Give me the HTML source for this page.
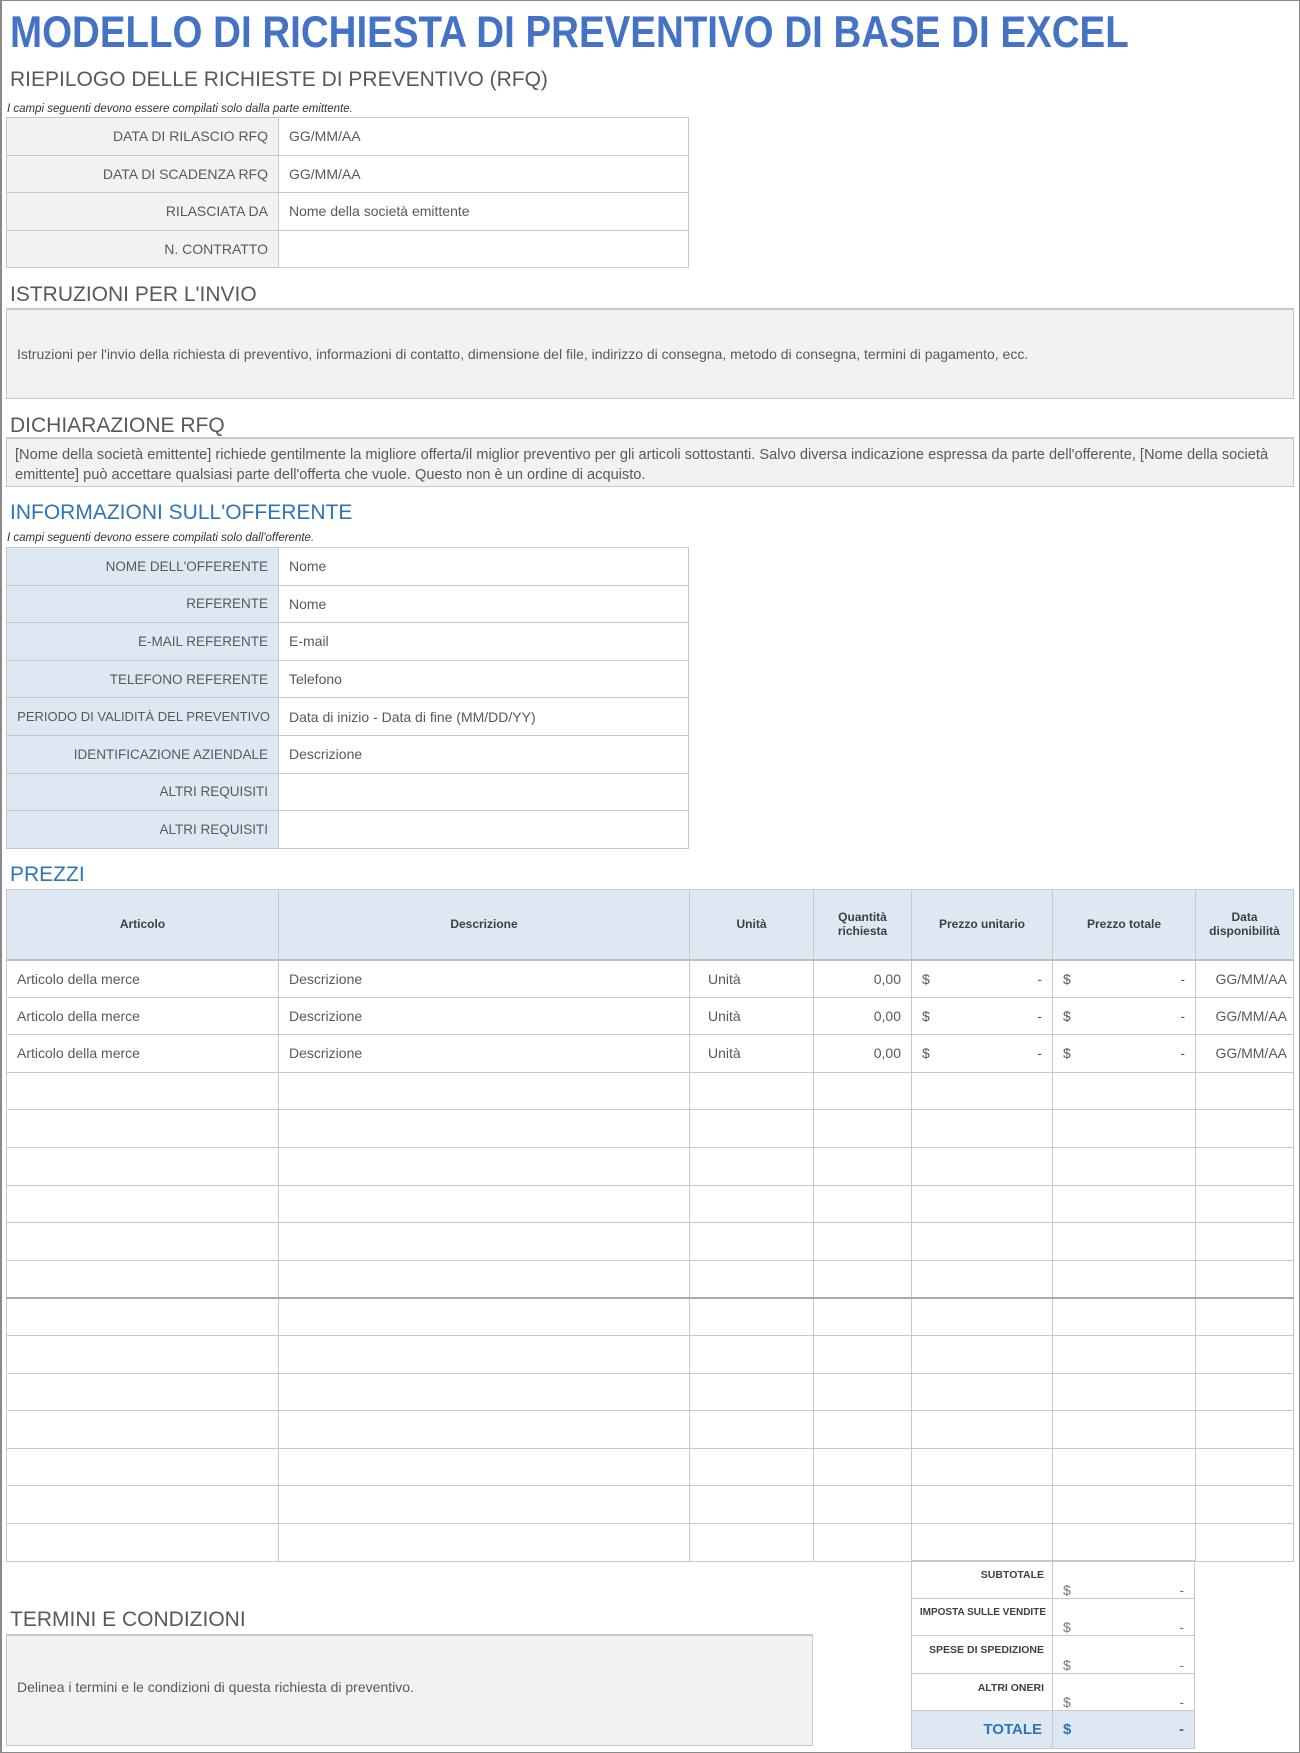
<!DOCTYPE html>
<html><head><meta charset="utf-8"><style>
*{box-sizing:border-box;margin:0;padding:0}
body{width:1300px;height:1753px;background:#fff;font-family:"Liberation Sans",sans-serif;color:#595959;position:relative;overflow:hidden}
.frame{position:absolute;left:0;top:0;width:1300px;height:1753px;border:1px solid #8a8a8a;border-left:2px solid #8a8a8a}
.a{position:absolute;white-space:nowrap}
h1{position:absolute;left:10px;top:8px;font-size:38.5px;font-weight:bold;color:#4472c4;white-space:nowrap;transform:scaleY(1.15);transform-origin:left top}
.h{position:absolute;left:10px;font-size:21px;color:#595959;white-space:nowrap}
.hb{color:#2e75b6}
.note{position:absolute;left:7px;font-size:11.5px;font-style:italic;color:#333}
table{position:absolute;border-collapse:collapse;table-layout:fixed}
td{border:1px solid #c8c8c8;font-size:14px;padding:0 10px;white-space:nowrap;overflow:hidden}
td.l{text-align:right;background:#f2f2f2}
td.lb{text-align:right;background:#dde8f3;font-size:13.5px}
.box{position:absolute;background:#f2f2f2;border:1px solid #c8c8c8;border-top:2px solid #c8c8c8;font-size:13.5px}
.p th{background:#dde8f3;border:1px solid #c8c8c8;font-size:12px;font-weight:bold;color:#404040;border-bottom:2px solid #bfbfbf}
.p td{height:37.6px;font-size:14px}
.r{text-align:right}
.t td{height:37.6px;font-size:10.5px;font-weight:bold;color:#404040}
.t td.l2{text-align:right;vertical-align:top;padding:8px 8px 0 0}
</style></head><body>
<div class="frame"></div>
<h1>MODELLO DI RICHIESTA DI PREVENTIVO DI BASE DI EXCEL</h1>
<div class="h" style="top:68px">RIEPILOGO DELLE RICHIESTE DI PREVENTIVO (RFQ)</div>
<div class="note" style="top:103px">I campi seguenti devono essere compilati solo dalla parte emittente.</div>
<table style="left:6px;top:117px;width:683px">
<col style="width:272px"><col>
<tr style="height:37.6px"><td class="l">DATA DI RILASCIO RFQ</td><td>GG/MM/AA</td></tr>
<tr style="height:37.6px"><td class="l">DATA DI SCADENZA RFQ</td><td>GG/MM/AA</td></tr>
<tr style="height:37.6px"><td class="l">RILASCIATA DA</td><td>Nome della società emittente</td></tr>
<tr style="height:37.6px"><td class="l">N. CONTRATTO</td><td></td></tr>
</table>
<div class="h" style="top:283px">ISTRUZIONI PER L'INVIO</div>
<div class="box" style="left:6px;top:308px;width:1288px;height:91px;padding:36px 10px;font-size:14px">Istruzioni per l'invio della richiesta di preventivo, informazioni di contatto, dimensione del file, indirizzo di consegna, metodo di consegna, termini di pagamento, ecc.</div>
<div class="h" style="top:414px">DICHIARAZIONE RFQ</div>
<div class="box" style="left:6px;top:437px;width:1288px;height:50px;padding:6px 8px;line-height:20px;font-size:14.6px;white-space:nowrap;overflow:hidden">[Nome della società emittente] richiede gentilmente la migliore offerta/il miglior preventivo per gli articoli sottostanti. Salvo diversa indicazione espressa da parte dell'offerente, [Nome della società<br>emittente] può accettare qualsiasi parte dell'offerta che vuole. Questo non è un ordine di acquisto.</div>
<div class="h hb" style="top:501px">INFORMAZIONI SULL'OFFERENTE</div>
<div class="note" style="top:532px">I campi seguenti devono essere compilati solo dall'offerente.</div>
<table style="left:6px;top:547px;width:683px">
<col style="width:272px"><col>
<tr style="height:37.6px"><td class="lb">NOME DELL'OFFERENTE</td><td>Nome</td></tr>
<tr style="height:37.6px"><td class="lb">REFERENTE</td><td>Nome</td></tr>
<tr style="height:37.6px"><td class="lb">E-MAIL REFERENTE</td><td>E-mail</td></tr>
<tr style="height:37.6px"><td class="lb">TELEFONO REFERENTE</td><td>Telefono</td></tr>
<tr style="height:37.6px"><td class="lb" style="padding:0 8px;font-size:13px">PERIODO DI VALIDITÀ DEL PREVENTIVO</td><td>Data di inizio - Data di fine (MM/DD/YY)</td></tr>
<tr style="height:37.6px"><td class="lb">IDENTIFICAZIONE AZIENDALE</td><td>Descrizione</td></tr>
<tr style="height:37.6px"><td class="lb">ALTRI REQUISITI</td><td></td></tr>
<tr style="height:37.6px"><td class="lb">ALTRI REQUISITI</td><td></td></tr>
</table>
<div class="h hb" style="top:863px">PREZZI</div>
<table class="p" style="left:6px;top:889px;width:1288px">
<col style="width:272px"><col style="width:411px"><col style="width:124px"><col style="width:98px"><col style="width:141px"><col style="width:143px"><col>
<tr style="height:70px"><th>Articolo</th><th>Descrizione</th><th>Unità</th><th>Quantità<br>richiesta</th><th>Prezzo unitario</th><th>Prezzo totale</th><th>Data<br>disponibilità</th></tr>
<tr><td>Articolo della merce</td><td>Descrizione</td><td style="padding-left:18px">Unità</td><td class="r">0,00</td><td>$<span style="float:right">-</span></td><td>$<span style="float:right">-</span></td><td style="padding:0 6px" class="r">GG/MM/AA</td></tr>
<tr><td>Articolo della merce</td><td>Descrizione</td><td style="padding-left:18px">Unità</td><td class="r">0,00</td><td>$<span style="float:right">-</span></td><td>$<span style="float:right">-</span></td><td style="padding:0 6px" class="r">GG/MM/AA</td></tr>
<tr><td>Articolo della merce</td><td>Descrizione</td><td style="padding-left:18px">Unità</td><td class="r">0,00</td><td>$<span style="float:right">-</span></td><td>$<span style="float:right">-</span></td><td style="padding:0 6px" class="r">GG/MM/AA</td></tr>
<tr><td></td><td></td><td></td><td></td><td></td><td></td><td></td></tr>
<tr><td></td><td></td><td></td><td></td><td></td><td></td><td></td></tr>
<tr><td></td><td></td><td></td><td></td><td></td><td></td><td></td></tr>
<tr><td></td><td></td><td></td><td></td><td></td><td></td><td></td></tr>
<tr><td></td><td></td><td></td><td></td><td></td><td></td><td></td></tr>
<tr style="border-bottom:2px solid #aaa"><td></td><td></td><td></td><td></td><td></td><td></td><td></td></tr>
<tr><td></td><td></td><td></td><td></td><td></td><td></td><td></td></tr>
<tr><td></td><td></td><td></td><td></td><td></td><td></td><td></td></tr>
<tr><td></td><td></td><td></td><td></td><td></td><td></td><td></td></tr>
<tr><td></td><td></td><td></td><td></td><td></td><td></td><td></td></tr>
<tr><td></td><td></td><td></td><td></td><td></td><td></td><td></td></tr>
<tr><td></td><td></td><td></td><td></td><td></td><td></td><td></td></tr>
<tr><td></td><td></td><td></td><td></td><td></td><td></td><td></td></tr>
</table>
<table class="t" style="left:911px;top:1560px;width:284px">
<col style="width:141px"><col>
<tr><td class="l2">SUBTOTALE</td><td style="font-weight:normal;font-size:14px;color:#777;vertical-align:bottom">$<span style="float:right">-</span></td></tr>
<tr><td class="l2" style="padding-right:6px;font-size:10px">IMPOSTA SULLE VENDITE</td><td style="font-weight:normal;font-size:14px;color:#777;vertical-align:bottom">$<span style="float:right">-</span></td></tr>
<tr><td class="l2">SPESE DI SPEDIZIONE</td><td style="font-weight:normal;font-size:14px;color:#777;vertical-align:bottom">$<span style="float:right">-</span></td></tr>
<tr><td class="l2">ALTRI ONERI</td><td style="font-weight:normal;font-size:14px;color:#777;vertical-align:bottom">$<span style="float:right">-</span></td></tr>
<tr style="background:#dde8f3"><td class="r" style="font-size:15px;color:#2e75b6">TOTALE</td><td style="font-size:15px;color:#2e75b6">$<span style="float:right">-</span></td></tr>
</table>
<div class="h" style="top:1608px">TERMINI E CONDIZIONI</div>
<div class="box" style="left:6px;top:1634px;width:807px;height:112px;padding:43px 10px;font-size:14px">Delinea i termini e le condizioni di questa richiesta di preventivo.</div>
</body></html>
